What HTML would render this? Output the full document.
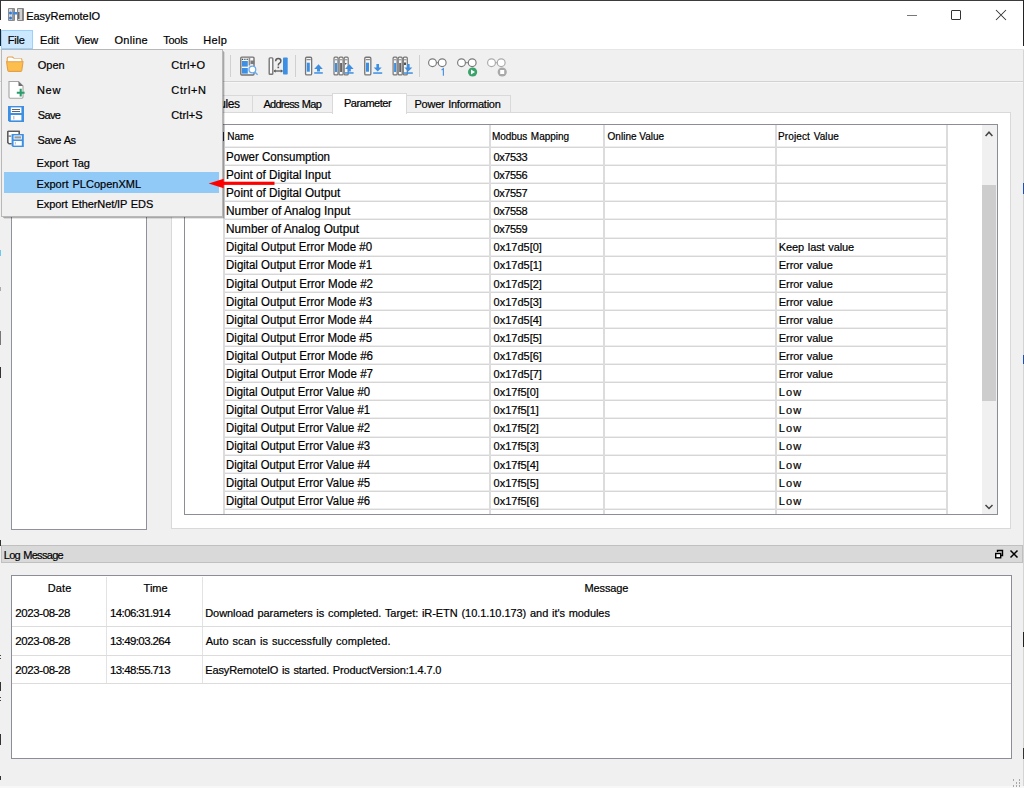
<!DOCTYPE html>
<html><head><meta charset="utf-8">
<style>
html,body{margin:0;padding:0;}
body{width:1024px;height:788px;overflow:hidden;position:relative;background:#f0f0f0;font-family:"Liberation Sans",sans-serif;}
.a{position:absolute;box-sizing:border-box;}
.t{position:absolute;line-height:20px;white-space:pre;font-family:"Liberation Sans",sans-serif;-webkit-text-stroke:0.2px currentColor;}
svg{position:absolute;overflow:visible;}
</style></head><body>
<!-- title + menubar white -->
<div class="a" style="left:0;top:0;width:1024px;height:49px;background:#fff"></div>
<div class="a" style="left:0;top:49px;width:1024px;height:1px;background:#e6e6e6"></div>
<div class="a" style="left:0;top:0;width:1024px;height:1px;background:#3b3b3b"></div>
<div class="a" style="left:0;top:0;width:1px;height:20px;background:#333"></div>
<div class="a" style="left:0;top:29px;width:1px;height:17px;background:#222"></div>
<div class="a" style="left:1023px;top:0;width:1px;height:46px;background:#222"></div>
<div class="a" style="left:1023px;top:50px;width:1px;height:738px;background:#d4d4d4"></div>

<!-- title icon -->
<svg style="left:0;top:0" width="30" height="30">
  <rect x="8" y="8" width="7" height="13" rx="1" fill="#8a8a8a"/>
  <rect x="9" y="9" width="5" height="11" fill="#d9d9d9"/>
  <rect x="12" y="9" width="2" height="11" fill="#9a9a9a"/>
  <circle cx="10.5" cy="13" r="1.5" fill="#2b7de0"/>
  <circle cx="10.5" cy="18" r="1.5" fill="#2b7de0"/>
  <rect x="13" y="12" width="4" height="2.5" fill="#3a8ae6"/>
  <rect x="17" y="8" width="7" height="13" rx="1" fill="#858585"/>
  <rect x="18" y="9" width="4" height="11" fill="#d0d0d0"/>
  <rect x="18" y="12" width="1.5" height="7" fill="#6a6a6a"/>
</svg>

<!-- window controls -->
<div class="a" style="left:907px;top:14.5px;width:10px;height:1.5px;background:#777"></div>
<div class="a" style="left:951px;top:10px;width:10px;height:10px;border:1px solid #333;border-radius:1px"></div>
<svg style="left:0;top:0" width="1024" height="30">
  <path d="M996 10 L1006 20 M1006 10 L996 20" stroke="#333" stroke-width="1.05"/>
</svg>

<!-- menubar File highlight -->
<div class="a" style="left:1px;top:30px;width:32px;height:19px;background:#cce8ff;border:1px solid #99d1ff"></div>

<!-- toolbar bottom line -->
<div class="a" style="left:0;top:81px;width:1023px;height:1px;background:#d2d2d2"></div>
<div class="a" style="left:0;top:82px;width:1023px;height:1px;background:#f7f7f7"></div>

<!-- toolbar separators -->
<div class="a" style="left:230px;top:55px;width:1px;height:22px;background:#d0d0d0"></div>
<div class="a" style="left:295px;top:55px;width:1px;height:22px;background:#d0d0d0"></div>
<div class="a" style="left:419px;top:55px;width:1px;height:22px;background:#d0d0d0"></div>

<!-- toolbar icons -->
<svg style="left:0;top:0" width="1024" height="90">
  <!-- icon1: module + magnifier -->
  <rect x="240.8" y="57.1" width="13.2" height="17.9" rx="1" fill="#f6f6f6" stroke="#727272" stroke-width="1.4"/>
  <rect x="242" y="58.7" width="1.2" height="1.2" fill="#333"/><rect x="244.3" y="58.7" width="1.2" height="1.2" fill="#333"/><rect x="246.6" y="58.7" width="1.2" height="1.2" fill="#333"/>
  <rect x="242" y="61" width="5.8" height="5.6" fill="#3d8fe3"/>
  <rect x="242" y="68" width="5.8" height="5.6" fill="#3d8fe3"/>
  <rect x="248.6" y="57.5" width="1.6" height="8" fill="#8c8c8c"/>
  <rect x="250.5" y="60.5" width="3.8" height="3.6" fill="#7a7a7a"/>
  <circle cx="252.4" cy="69.5" r="3.4" fill="#fff" stroke="#66aaf0" stroke-width="1.3"/>
  <path d="M254.8 72 L257.6 74.8" stroke="#66aaf0" stroke-width="1.4"/>
  <!-- icon2: ? -->
  <rect x="269.2" y="57.9" width="3.6" height="16.4" rx="0.8" fill="#fafafa" stroke="#767676" stroke-width="1.4"/>
  <rect x="283" y="57.5" width="4.7" height="17.1" rx="0.8" fill="#3d8fe3"/>
  <path d="M275.6 61.2 Q275.8 58.6 278.3 58.6 Q280.9 58.6 280.9 61 Q280.9 62.6 279.3 63.4 Q278.3 64 278.3 65.6" stroke="#5c5c5c" stroke-width="1.5" fill="none"/>
  <rect x="277.5" y="66.6" width="1.6" height="1.6" fill="#5c5c5c"/>
  <path d="M274 71 H282.5" stroke="#5c5c5c" stroke-width="1.3"/>
  <path d="M273.6 71 L275.6 69.2 V72.8 Z M282.8 71 L280.8 69.2 V72.8 Z" fill="#5c5c5c"/>
  <!-- icon3 -->
  <rect x="305.54999999999995" y="57.25" width="6.1000000000000005" height="17.599999999999998" rx="1.2" fill="#f6f6f6" stroke="#767676" stroke-width="1.3"/><rect x="306.5" y="59.0" width="4.2" height="1.2" fill="#8a8a8a"/><rect x="306.8" y="62.7" width="3" height="9" fill="#3d8fe3"/><path d="M314.2 69 L318.5 64.3 L322.8 69 H320.0 V71.6 H317.0 V69 Z" fill="#3d8fe3"/><rect x="314.2" y="72.2" width="8.6" height="1.5" fill="#3d8fe3"/>
  <!-- icon4 -->
  <rect x="334.0" y="57.2" width="4.0" height="17.7" rx="1" fill="#f6f6f6" stroke="#767676" stroke-width="1.2"/><rect x="334.79999999999995" y="59.2" width="2.4000000000000004" height="1.1" fill="#8a8a8a"/><rect x="335.0" y="63" width="2" height="9" fill="#3d8fe3"/><rect x="339.1" y="57.2" width="4.0" height="17.7" rx="1" fill="#f6f6f6" stroke="#767676" stroke-width="1.2"/><rect x="339.9" y="59.2" width="2.4000000000000004" height="1.1" fill="#8a8a8a"/><rect x="340.1" y="63" width="2" height="9" fill="#666"/><rect x="344.20000000000005" y="57.2" width="4.0" height="17.7" rx="1" fill="#f6f6f6" stroke="#767676" stroke-width="1.2"/><rect x="345.0" y="59.2" width="2.4000000000000004" height="1.1" fill="#8a8a8a"/><path d="M345 63 H347 L345 65 Z" fill="#555"/><path d="M345.0 69 L349.3 64.3 L353.6 69 H350.8 V71.6 H347.8 V69 Z" fill="#3d8fe3"/><rect x="345.0" y="72.2" width="8.6" height="1.5" fill="#3d8fe3"/>
  <!-- icon5 -->
  <rect x="364.75" y="57.25" width="6.1000000000000005" height="17.599999999999998" rx="1.2" fill="#f6f6f6" stroke="#767676" stroke-width="1.3"/><rect x="365.70000000000005" y="59.0" width="4.2" height="1.2" fill="#8a8a8a"/><rect x="366" y="62.7" width="3" height="9" fill="#3d8fe3"/><path d="M376.4 64 H379.0 V67.6 H381.7 L377.7 71.6 L373.7 67.6 H376.4 Z" fill="#3d8fe3"/><rect x="373.2" y="72.3" width="9" height="1.5" fill="#3d8fe3"/>
  <!-- icon6 -->
  <rect x="393.1" y="57.2" width="4.0" height="17.7" rx="1" fill="#f6f6f6" stroke="#767676" stroke-width="1.2"/><rect x="393.9" y="59.2" width="2.4000000000000004" height="1.1" fill="#8a8a8a"/><rect x="394.1" y="63" width="2" height="9" fill="#3d8fe3"/><rect x="398.20000000000005" y="57.2" width="4.0" height="17.7" rx="1" fill="#f6f6f6" stroke="#767676" stroke-width="1.2"/><rect x="399.0" y="59.2" width="2.4000000000000004" height="1.1" fill="#8a8a8a"/><rect x="399.20000000000005" y="63" width="2" height="9" fill="#666"/><rect x="403.3" y="57.2" width="4.0" height="17.7" rx="1" fill="#f6f6f6" stroke="#767676" stroke-width="1.2"/><rect x="404.09999999999997" y="59.2" width="2.4000000000000004" height="1.1" fill="#8a8a8a"/><rect x="404" y="62.5" width="2" height="2.5" fill="#555"/><path d="M407.0 64 H409.6 V67.6 H412.3 L408.3 71.6 L404.3 67.6 H407.0 Z" fill="#3d8fe3"/><rect x="403.8" y="72.3" width="9" height="1.5" fill="#3d8fe3"/>
  <!-- icon7: circles + 1 -->
  <circle cx="432.5" cy="62.7" r="3.9" fill="#fff" stroke="#7a7a7a" stroke-width="1.15"/>
  <circle cx="442.2" cy="62.7" r="3.9" fill="#fff" stroke="#7a7a7a" stroke-width="1.15"/>
  <rect x="436.4" y="62.2" width="2" height="1" fill="#7a7a7a"/>
  <path d="M441.6 69.9 L443.4 68.6 V75.8" stroke="#4b95e6" stroke-width="1.2" fill="none"/>
  <!-- icon8: circles + play -->
  <circle cx="461.5" cy="62.7" r="3.9" fill="#fff" stroke="#7a7a7a" stroke-width="1.15"/>
  <circle cx="472.2" cy="62.7" r="3.9" fill="#fff" stroke="#7a7a7a" stroke-width="1.15"/>
  <rect x="465.4" y="62.2" width="2.8" height="1" fill="#7a7a7a"/><circle cx="472.6" cy="72" r="4.6" fill="#3aa36a"/>
  <path d="M471 69.5 L475 72 L471 74.5 Z" fill="#fff"/>
  <!-- icon9: circles + stop -->
  <circle cx="491.5" cy="62.7" r="3.9" fill="#fff" stroke="#a9a9a9" stroke-width="1.15"/>
  <circle cx="501.2" cy="62.7" r="3.9" fill="#fff" stroke="#a9a9a9" stroke-width="1.15"/>
  <rect x="495.4" y="62.2" width="2" height="1" fill="#a9a9a9"/><circle cx="502.2" cy="72" r="4.6" fill="#a9a9a9"/>
  <rect x="500.2" y="70" width="4" height="4" fill="#fff"/>
</svg>

<!-- tabs -->
<div class="a" style="left:172px;top:95px;width:81px;height:18px;background:#f0f0f0;border:1px solid #d9d9d9;border-bottom:none"></div>
<div class="t" style="left:197px;top:94px;font-size:12px;letter-spacing:-0.4px">Modules</div>
<div class="a" style="left:252px;top:95px;width:81px;height:18px;background:#f0f0f0;border:1px solid #d9d9d9;border-bottom:none"></div>
<div class="a" style="left:406px;top:95px;width:105px;height:18px;background:#f0f0f0;border:1px solid #d9d9d9;border-bottom:none"></div>

<!-- left panel -->
<div class="a" style="left:11px;top:96px;width:136px;height:434px;background:#fff;border:1px solid #8f929a"></div>

<!-- tab pane -->
<div class="a" style="left:171px;top:112px;width:840px;height:417px;background:#fff;border:1px solid #d9d9d9"></div>
<!-- active tab -->
<div class="a" style="left:332px;top:93px;width:75px;height:21px;background:#fff;border:1px solid #d9d9d9;border-bottom:none"></div>

<!-- table -->
<div class="a" style="left:184px;top:124px;width:814px;height:391px;background:#fff;border:1px solid #8b8e96;border-top-color:#8b8e96"></div>
<!-- table grid -->
<div id="grid"></div>
<svg style="left:0;top:0" width="1024" height="520">
<rect x="223" y="146" width="724" height="1" fill="#eeeeee"/>
<rect x="223" y="147" width="724" height="1" fill="#d6d6d6"/>
<rect x="223" y="164" width="724" height="1" fill="#eeeeee"/>
<rect x="223" y="165" width="724" height="1" fill="#d6d6d6"/>
<rect x="223" y="182" width="724" height="1" fill="#eeeeee"/>
<rect x="223" y="183" width="724" height="1" fill="#d6d6d6"/>
<rect x="223" y="200" width="724" height="1" fill="#eeeeee"/>
<rect x="223" y="201" width="724" height="1" fill="#d6d6d6"/>
<rect x="223" y="218" width="724" height="1" fill="#eeeeee"/>
<rect x="223" y="219" width="724" height="1" fill="#d6d6d6"/>
<rect x="223" y="237" width="724" height="1" fill="#eeeeee"/>
<rect x="223" y="238" width="724" height="1" fill="#d6d6d6"/>
<rect x="223" y="255" width="724" height="1" fill="#eeeeee"/>
<rect x="223" y="256" width="724" height="1" fill="#d6d6d6"/>
<rect x="223" y="273" width="724" height="1" fill="#eeeeee"/>
<rect x="223" y="274" width="724" height="1" fill="#d6d6d6"/>
<rect x="223" y="291" width="724" height="1" fill="#eeeeee"/>
<rect x="223" y="292" width="724" height="1" fill="#d6d6d6"/>
<rect x="223" y="309" width="724" height="1" fill="#eeeeee"/>
<rect x="223" y="310" width="724" height="1" fill="#d6d6d6"/>
<rect x="223" y="327" width="724" height="1" fill="#eeeeee"/>
<rect x="223" y="328" width="724" height="1" fill="#d6d6d6"/>
<rect x="223" y="345" width="724" height="1" fill="#eeeeee"/>
<rect x="223" y="346" width="724" height="1" fill="#d6d6d6"/>
<rect x="223" y="363" width="724" height="1" fill="#eeeeee"/>
<rect x="223" y="364" width="724" height="1" fill="#d6d6d6"/>
<rect x="223" y="381" width="724" height="1" fill="#eeeeee"/>
<rect x="223" y="382" width="724" height="1" fill="#d6d6d6"/>
<rect x="223" y="399" width="724" height="1" fill="#eeeeee"/>
<rect x="223" y="400" width="724" height="1" fill="#d6d6d6"/>
<rect x="223" y="417" width="724" height="1" fill="#eeeeee"/>
<rect x="223" y="418" width="724" height="1" fill="#d6d6d6"/>
<rect x="223" y="436" width="724" height="1" fill="#eeeeee"/>
<rect x="223" y="437" width="724" height="1" fill="#d6d6d6"/>
<rect x="223" y="454" width="724" height="1" fill="#eeeeee"/>
<rect x="223" y="455" width="724" height="1" fill="#d6d6d6"/>
<rect x="223" y="472" width="724" height="1" fill="#eeeeee"/>
<rect x="223" y="473" width="724" height="1" fill="#d6d6d6"/>
<rect x="223" y="490" width="724" height="1" fill="#eeeeee"/>
<rect x="223" y="491" width="724" height="1" fill="#d6d6d6"/>
<rect x="223" y="508" width="724" height="1" fill="#eeeeee"/>
<rect x="223" y="509" width="724" height="1" fill="#d6d6d6"/>
<rect x="223" y="125" width="2" height="389" fill="#dcdcdc"/>
<rect x="489" y="125" width="2" height="389" fill="#dcdcdc"/>
<rect x="603" y="125" width="2" height="389" fill="#dcdcdc"/>
<rect x="775" y="125" width="2" height="389" fill="#dcdcdc"/>
<rect x="946" y="125" width="2" height="389" fill="#dcdcdc"/>
</svg>
<!-- scrollbar -->
<div class="a" style="left:982px;top:125px;width:15px;height:389px;background:#f0f0f0"></div>
<div class="a" style="left:982px;top:185px;width:14px;height:216px;background:#cdcdcd"></div>
<svg style="left:0;top:0" width="1024" height="520">
  <path d="M985.6 136 L989 132.2 L992.4 136" stroke="#444" stroke-width="1.5" fill="none"/>
  <path d="M985.5 505 L989 508.5 L992.5 505" stroke="#444" stroke-width="1.5" fill="none"/>
</svg>
<div class="a" style="left:223px;top:132px;width:1px;height:9px;background:#2a2a40"></div>

<!-- log dock -->
<div class="a" style="left:1px;top:545px;width:1022px;height:18px;background:#d9d9d9;border:1px solid #c0c0c0"></div>
<svg style="left:0;top:0" width="1024" height="788">
  <rect x="995.7" y="553.5" width="5" height="4.3" fill="#fff" stroke="#000" stroke-width="1.4"/>
  <path d="M997.5 552 V550.5 H1002.5 V555.5 H1001" stroke="#000" stroke-width="1.4" fill="none"/>
  <path d="M1010.5 550.5 L1017.5 557.5 M1017.5 550.5 L1010.5 557.5" stroke="#000" stroke-width="1.5"/>
</svg>
<div class="a" style="left:11px;top:575px;width:1001px;height:184px;background:#fff;border:1px solid #8b8e96"></div>
<div class="a" style="left:106px;top:577px;width:1px;height:107px;background:#e3e3e3"></div>
<div class="a" style="left:202px;top:577px;width:1px;height:107px;background:#e3e3e3"></div>
<div class="a" style="left:12px;top:626px;width:999px;height:1px;background:#dcdcdc"></div>
<div class="a" style="left:12px;top:655px;width:999px;height:1px;background:#dcdcdc"></div>
<div class="a" style="left:12px;top:683px;width:999px;height:1px;background:#dcdcdc"></div>
<!-- status bar line -->
<div class="a" style="left:0;top:786px;width:1024px;height:2px;background:#f7f7f7"></div>

<!-- edge artifacts & grip -->
<div class="a" style="left:1012.5px;top:779px;width:1.6px;height:1.6px;background:#a8a8a8"></div>
<div class="a" style="left:1015.5px;top:782px;width:1.6px;height:1.6px;background:#a8a8a8"></div>
<div class="a" style="left:1018.5px;top:779px;width:1.6px;height:1.6px;background:#a8a8a8"></div>
<div class="a" style="left:1012.5px;top:785px;width:1.6px;height:1.6px;background:#a8a8a8"></div>
<div class="a" style="left:1015.5px;top:785px;width:1.6px;height:1.6px;background:#a8a8a8"></div>
<div class="a" style="left:1018.5px;top:782px;width:1.6px;height:1.6px;background:#a8a8a8"></div>
<div class="a" style="left:1018.5px;top:785px;width:1.6px;height:1.6px;background:#a8a8a8"></div>
<div class="a" style="left:1023px;top:183px;width:1px;height:11px;background:#1f4fb0"></div>
<div class="a" style="left:1023px;top:355px;width:1px;height:9px;background:#1f4fb0"></div>
<div class="a" style="left:1023px;top:632px;width:1px;height:15px;background:#222"></div>
<div class="a" style="left:1023px;top:748px;width:1px;height:11px;background:#333"></div>
<div class="a" style="left:0;top:540px;width:1px;height:6px;background:#333"></div>
<div class="a" style="left:0;top:331px;width:1px;height:14px;background:#777"></div>
<div class="a" style="left:0;top:250px;width:1px;height:6px;background:#6cc8f0"></div>
<div class="a" style="left:0;top:287px;width:1px;height:4px;background:#aaa"></div>
<div class="a" style="left:0;top:367px;width:1px;height:11px;background:#333"></div>
<div class="a" style="left:0;top:655px;width:1px;height:1px;background:#444"></div>
<div class="a" style="left:0;top:658px;width:1px;height:1px;background:#444"></div>
<div class="a" style="left:0;top:682px;width:1px;height:9px;background:#333"></div>
<div class="a" style="left:0;top:697px;width:1px;height:1px;background:#444"></div>
<div class="a" style="left:0;top:700px;width:1px;height:1px;background:#444"></div>
<div class="a" style="left:0;top:734px;width:1px;height:11px;background:#333"></div>
<div class="a" style="left:0;top:776px;width:1px;height:4px;background:#333"></div>
<div class="t" style="left:26.30px;top:5.60px;font-size:11px;letter-spacing:-0.064px;word-spacing:0.00px;color:#000;">EasyRemoteIO</div>
<div class="t" style="left:7.80px;top:30.00px;font-size:11px;letter-spacing:-0.200px;word-spacing:0.00px;color:#000;">File</div>
<div class="t" style="left:40.00px;top:30.00px;font-size:11px;letter-spacing:0.067px;word-spacing:0.00px;color:#000;">Edit</div>
<div class="t" style="left:75.00px;top:30.00px;font-size:11px;letter-spacing:-0.167px;word-spacing:0.00px;color:#000;">View</div>
<div class="t" style="left:114.40px;top:30.00px;font-size:11px;letter-spacing:0.300px;word-spacing:0.00px;color:#000;">Online</div>
<div class="t" style="left:163.20px;top:30.00px;font-size:11px;letter-spacing:-0.250px;word-spacing:0.00px;color:#000;">Tools</div>
<div class="t" style="left:203.20px;top:30.00px;font-size:11px;letter-spacing:0.333px;word-spacing:0.00px;color:#000;">Help</div>
<div class="t" style="left:263.40px;top:94.00px;font-size:11px;letter-spacing:-0.720px;word-spacing:0.80px;color:#000;">Address Map</div>
<div class="t" style="left:344.00px;top:92.75px;font-size:11px;letter-spacing:-0.463px;word-spacing:0.00px;color:#000;">Parameter</div>
<div class="t" style="left:414.50px;top:94.00px;font-size:11px;letter-spacing:-0.231px;word-spacing:0.80px;color:#000;">Power Information</div>
<div class="t" style="left:227.20px;top:127.20px;font-size:10px;letter-spacing:0.000px;word-spacing:0.00px;color:#000;">Name</div>
<div class="t" style="left:491.90px;top:127.20px;font-size:10px;letter-spacing:-0.031px;word-spacing:0.80px;color:#000;">Modbus Mapping</div>
<div class="t" style="left:607.60px;top:127.20px;font-size:10px;letter-spacing:0.000px;word-spacing:0.00px;color:#000;">Online Value</div>
<div class="t" style="left:778.10px;top:127.20px;font-size:10px;letter-spacing:0.108px;word-spacing:0.80px;color:#000;">Project Value</div>
<div class="t" style="left:226.00px;top:146.80px;font-size:12px;transform:scaleX(0.9626);transform-origin:1px 0;color:#000">Power Consumption</div>
<div class="t" style="left:493.60px;top:146.80px;font-size:11px;letter-spacing:-0.420px;word-spacing:0.00px;color:#000;">0x7533</div>
<div class="t" style="left:226.00px;top:164.90px;font-size:12px;transform:scaleX(0.9757);transform-origin:1px 0;color:#000">Point of Digital Input</div>
<div class="t" style="left:493.60px;top:164.90px;font-size:11px;letter-spacing:-0.420px;word-spacing:0.00px;color:#000;">0x7556</div>
<div class="t" style="left:226.00px;top:183.00px;font-size:12px;transform:scaleX(0.9784);transform-origin:1px 0;color:#000">Point of Digital Output</div>
<div class="t" style="left:493.60px;top:183.00px;font-size:11px;letter-spacing:-0.420px;word-spacing:0.00px;color:#000;">0x7557</div>
<div class="t" style="left:226.00px;top:201.10px;font-size:12px;transform:scaleX(0.9864);transform-origin:1px 0;color:#000">Number of Analog Input</div>
<div class="t" style="left:493.60px;top:201.10px;font-size:11px;letter-spacing:-0.420px;word-spacing:0.00px;color:#000;">0x7558</div>
<div class="t" style="left:226.00px;top:219.20px;font-size:12px;transform:scaleX(0.9822);transform-origin:1px 0;color:#000">Number of Analog Output</div>
<div class="t" style="left:493.60px;top:219.20px;font-size:11px;letter-spacing:-0.420px;word-spacing:0.00px;color:#000;">0x7559</div>
<div class="t" style="left:226.00px;top:237.30px;font-size:12px;transform:scaleX(0.9559);transform-origin:1px 0;color:#000">Digital Output Error Mode #0</div>
<div class="t" style="left:493.60px;top:237.30px;font-size:11px;letter-spacing:0.000px;word-spacing:0.00px;color:#000;">0x17d5[0]</div>
<div class="t" style="left:778.80px;top:237.30px;font-size:11px;letter-spacing:-0.100px;word-spacing:0.80px;color:#000;">Keep last value</div>
<div class="t" style="left:226.00px;top:255.40px;font-size:12px;transform:scaleX(0.9559);transform-origin:1px 0;color:#000">Digital Output Error Mode #1</div>
<div class="t" style="left:493.60px;top:255.40px;font-size:11px;letter-spacing:0.000px;word-spacing:0.00px;color:#000;">0x17d5[1]</div>
<div class="t" style="left:778.80px;top:255.40px;font-size:11px;letter-spacing:-0.060px;word-spacing:0.80px;color:#000;">Error value</div>
<div class="t" style="left:226.00px;top:273.50px;font-size:12px;transform:scaleX(0.9623);transform-origin:1px 0;color:#000">Digital Output Error Mode #2</div>
<div class="t" style="left:493.60px;top:273.50px;font-size:11px;letter-spacing:0.000px;word-spacing:0.00px;color:#000;">0x17d5[2]</div>
<div class="t" style="left:778.80px;top:273.50px;font-size:11px;letter-spacing:-0.060px;word-spacing:0.80px;color:#000;">Error value</div>
<div class="t" style="left:226.00px;top:291.60px;font-size:12px;transform:scaleX(0.9559);transform-origin:1px 0;color:#000">Digital Output Error Mode #3</div>
<div class="t" style="left:493.60px;top:291.60px;font-size:11px;letter-spacing:0.000px;word-spacing:0.00px;color:#000;">0x17d5[3]</div>
<div class="t" style="left:778.80px;top:291.60px;font-size:11px;letter-spacing:-0.060px;word-spacing:0.80px;color:#000;">Error value</div>
<div class="t" style="left:226.00px;top:309.70px;font-size:12px;transform:scaleX(0.9559);transform-origin:1px 0;color:#000">Digital Output Error Mode #4</div>
<div class="t" style="left:493.60px;top:309.70px;font-size:11px;letter-spacing:0.000px;word-spacing:0.00px;color:#000;">0x17d5[4]</div>
<div class="t" style="left:778.80px;top:309.70px;font-size:11px;letter-spacing:-0.060px;word-spacing:0.80px;color:#000;">Error value</div>
<div class="t" style="left:226.00px;top:327.80px;font-size:12px;transform:scaleX(0.9559);transform-origin:1px 0;color:#000">Digital Output Error Mode #5</div>
<div class="t" style="left:493.60px;top:327.80px;font-size:11px;letter-spacing:0.000px;word-spacing:0.00px;color:#000;">0x17d5[5]</div>
<div class="t" style="left:778.80px;top:327.80px;font-size:11px;letter-spacing:-0.060px;word-spacing:0.80px;color:#000;">Error value</div>
<div class="t" style="left:226.00px;top:345.90px;font-size:12px;transform:scaleX(0.9623);transform-origin:1px 0;color:#000">Digital Output Error Mode #6</div>
<div class="t" style="left:493.60px;top:345.90px;font-size:11px;letter-spacing:0.000px;word-spacing:0.00px;color:#000;">0x17d5[6]</div>
<div class="t" style="left:778.80px;top:345.90px;font-size:11px;letter-spacing:-0.060px;word-spacing:0.80px;color:#000;">Error value</div>
<div class="t" style="left:226.00px;top:364.00px;font-size:12px;transform:scaleX(0.9623);transform-origin:1px 0;color:#000">Digital Output Error Mode #7</div>
<div class="t" style="left:493.60px;top:364.00px;font-size:11px;letter-spacing:0.000px;word-spacing:0.00px;color:#000;">0x17d5[7]</div>
<div class="t" style="left:778.80px;top:364.00px;font-size:11px;letter-spacing:-0.060px;word-spacing:0.80px;color:#000;">Error value</div>
<div class="t" style="left:226.00px;top:382.10px;font-size:12px;transform:scaleX(0.9437);transform-origin:1px 0;color:#000">Digital Output Error Value #0</div>
<div class="t" style="left:493.60px;top:382.10px;font-size:11px;letter-spacing:0.000px;word-spacing:0.00px;color:#000;">0x17f5[0]</div>
<div class="t" style="left:778.80px;top:382.10px;font-size:11px;letter-spacing:1.050px;word-spacing:0.00px;color:#000;">Low</div>
<div class="t" style="left:226.00px;top:400.20px;font-size:12px;transform:scaleX(0.9437);transform-origin:1px 0;color:#000">Digital Output Error Value #1</div>
<div class="t" style="left:493.60px;top:400.20px;font-size:11px;letter-spacing:0.000px;word-spacing:0.00px;color:#000;">0x17f5[1]</div>
<div class="t" style="left:778.80px;top:400.20px;font-size:11px;letter-spacing:1.050px;word-spacing:0.00px;color:#000;">Low</div>
<div class="t" style="left:226.00px;top:418.30px;font-size:12px;transform:scaleX(0.9437);transform-origin:1px 0;color:#000">Digital Output Error Value #2</div>
<div class="t" style="left:493.60px;top:418.30px;font-size:11px;letter-spacing:0.000px;word-spacing:0.00px;color:#000;">0x17f5[2]</div>
<div class="t" style="left:778.80px;top:418.30px;font-size:11px;letter-spacing:1.050px;word-spacing:0.00px;color:#000;">Low</div>
<div class="t" style="left:226.00px;top:436.40px;font-size:12px;transform:scaleX(0.9437);transform-origin:1px 0;color:#000">Digital Output Error Value #3</div>
<div class="t" style="left:493.60px;top:436.40px;font-size:11px;letter-spacing:0.000px;word-spacing:0.00px;color:#000;">0x17f5[3]</div>
<div class="t" style="left:778.80px;top:436.40px;font-size:11px;letter-spacing:1.050px;word-spacing:0.00px;color:#000;">Low</div>
<div class="t" style="left:226.00px;top:454.50px;font-size:12px;transform:scaleX(0.9437);transform-origin:1px 0;color:#000">Digital Output Error Value #4</div>
<div class="t" style="left:493.60px;top:454.50px;font-size:11px;letter-spacing:0.000px;word-spacing:0.00px;color:#000;">0x17f5[4]</div>
<div class="t" style="left:778.80px;top:454.50px;font-size:11px;letter-spacing:1.050px;word-spacing:0.00px;color:#000;">Low</div>
<div class="t" style="left:226.00px;top:472.60px;font-size:12px;transform:scaleX(0.9437);transform-origin:1px 0;color:#000">Digital Output Error Value #5</div>
<div class="t" style="left:493.60px;top:472.60px;font-size:11px;letter-spacing:0.000px;word-spacing:0.00px;color:#000;">0x17f5[5]</div>
<div class="t" style="left:778.80px;top:472.60px;font-size:11px;letter-spacing:1.050px;word-spacing:0.00px;color:#000;">Low</div>
<div class="t" style="left:226.00px;top:490.70px;font-size:12px;transform:scaleX(0.9437);transform-origin:1px 0;color:#000">Digital Output Error Value #6</div>
<div class="t" style="left:493.60px;top:490.70px;font-size:11px;letter-spacing:0.000px;word-spacing:0.00px;color:#000;">0x17f5[6]</div>
<div class="t" style="left:778.80px;top:490.70px;font-size:11px;letter-spacing:1.050px;word-spacing:0.00px;color:#000;">Low</div>
<div class="t" style="left:3.70px;top:545.10px;font-size:11px;letter-spacing:-0.680px;word-spacing:0.80px;color:#000;">Log Message</div>
<div class="t" style="left:47.80px;top:577.60px;font-size:11px;letter-spacing:0.100px;word-spacing:0.00px;color:#000;">Date</div>
<div class="t" style="left:143.60px;top:577.80px;font-size:11px;letter-spacing:0.000px;word-spacing:0.00px;color:#000;">Time</div>
<div class="t" style="left:584.60px;top:577.50px;font-size:11px;letter-spacing:-0.133px;word-spacing:0.00px;color:#000;">Message</div>
<div class="t" style="left:15.30px;top:602.60px;font-size:11.5px;letter-spacing:-0.411px;word-spacing:0.00px;color:#000;">2023-08-28</div>
<div class="t" style="left:110.00px;top:602.60px;font-size:11.5px;letter-spacing:-0.600px;word-spacing:0.00px;color:#000;">14:06:31.914</div>
<div class="t" style="left:205.20px;top:602.70px;font-size:11px;letter-spacing:-0.054px;word-spacing:0.80px;color:#000;">Download parameters is completed. Target: iR-ETN (10.1.10.173) and it's modules</div>
<div class="t" style="left:15.30px;top:631.10px;font-size:11.5px;letter-spacing:-0.411px;word-spacing:0.00px;color:#000;">2023-08-28</div>
<div class="t" style="left:110.00px;top:631.10px;font-size:11.5px;letter-spacing:-0.600px;word-spacing:0.00px;color:#000;">13:49:03.264</div>
<div class="t" style="left:205.70px;top:631.20px;font-size:11px;letter-spacing:0.069px;word-spacing:0.80px;color:#000;">Auto scan is successfully completed.</div>
<div class="t" style="left:15.30px;top:659.50px;font-size:11.5px;letter-spacing:-0.411px;word-spacing:0.00px;color:#000;">2023-08-28</div>
<div class="t" style="left:110.00px;top:659.50px;font-size:11.5px;letter-spacing:-0.600px;word-spacing:0.00px;color:#000;">13:48:55.713</div>
<div class="t" style="left:205.20px;top:659.60px;font-size:11px;letter-spacing:-0.126px;word-spacing:0.80px;color:#000;">EasyRemoteIO is started. ProductVersion:1.4.7.0</div>

<!-- menu popup -->
<div class="a" style="left:4px;top:52px;width:221px;height:167px;background:rgba(0,0,0,0.10)"></div>
<div class="a" style="left:3px;top:51px;width:221px;height:167px;background:rgba(0,0,0,0.22)"></div>
<div class="a" style="left:1px;top:49px;width:222px;height:168px;background:#f0f0f0;border:1px solid #b8b8b8"></div>
<div class="a" style="left:4px;top:172px;width:215px;height:21px;background:#91c9f7"></div>
<svg style="left:0;top:0" width="240" height="220">
  <!-- folder -->
  <path d="M7.2 62 V58.5 Q7.2 57 8.7 57 H12.5 L14 58.5 H20.5 Q22 58.5 22 60 V62" fill="#fff" stroke="#e3a049" stroke-width="1.1"/>
  <rect x="9" y="58.6" width="12" height="3" fill="#fff"/>
  <path d="M6.6 61.8 H23 L21.8 70.4 Q21.6 71.4 20.6 71.4 H9 Q8 71.4 7.8 70.4 Z" fill="#fcbf4d" stroke="#e3a049" stroke-width="1.1"/>
  <!-- new -->
  <path d="M9 81.5 H18.5 L23 86 V97 Q23 98.2 21.8 98.2 H10.2 Q9 98.2 9 97 Z" fill="#fff" stroke="#a3a3a3" stroke-width="1.1"/>
  <path d="M18.5 81.5 L23 86 H18.5 Z" fill="#6e6e6e"/>
  <path d="M20.7 88.8 V96.6 M16.8 92.7 H24.6" stroke="#2a9e6a" stroke-width="2.1"/>
  <!-- save -->
  <path d="M8 106 H24 V122 H9.5 L8 120.5 Z" fill="#3d8fe3"/>
  <rect x="10.8" y="107.4" width="10.6" height="5.6" fill="#fff"/>
  <rect x="12" y="109" width="8" height="0.9" fill="#555"/>
  <rect x="12" y="111" width="8" height="0.9" fill="#555"/>
  <rect x="10.8" y="115" width="10.6" height="5.4" fill="#fff"/>
  <rect x="13.2" y="116" width="1.2" height="3.5" fill="#bbb"/>
  <!-- save as -->
  <path d="M7.8 131.3 H19.2 V134 M7.8 131.3 V142.5 L9 143.7 H11.5" fill="none" stroke="#5a5a5a" stroke-width="1.3"/>
  <rect x="8.5" y="132" width="10" height="11" fill="#fff"/>
  <path d="M7.8 131.3 H19.2 V134 M7.8 131.3 V142.5 L9 143.7 H11.5" fill="none" stroke="#5a5a5a" stroke-width="1.3"/>
  <rect x="8.2" y="135.5" width="3" height="1.2" fill="#6a6a6a"/>
  <path d="M11.6 134 H23.8 V147 H12.8 L11.6 145.8 Z" fill="#3d8fe3"/>
  <rect x="13.6" y="135.4" width="8.2" height="4" fill="#fff"/>
  <rect x="14.4" y="136.3" width="6.6" height="2.2" fill="#9a9a9a"/>
  <rect x="13.6" y="141" width="8.2" height="4.6" fill="#fff"/>
  <rect x="14.8" y="142" width="1" height="2.5" fill="#bbb"/>
</svg>
<div class="t" style="left:37.70px;top:55.10px;font-size:11px;letter-spacing:0.033px;word-spacing:0.00px;color:#000;">Open</div>
<div class="t" style="left:171.30px;top:55.10px;font-size:11px;letter-spacing:0.340px;word-spacing:0.00px;color:#000;">Ctrl+O</div>
<div class="t" style="left:36.90px;top:80.00px;font-size:11px;letter-spacing:0.750px;word-spacing:0.00px;color:#000;">New</div>
<div class="t" style="left:171.30px;top:80.00px;font-size:11px;letter-spacing:0.640px;word-spacing:0.00px;color:#000;">Ctrl+N</div>
<div class="t" style="left:37.70px;top:104.90px;font-size:11px;letter-spacing:-0.633px;word-spacing:0.00px;color:#000;">Save</div>
<div class="t" style="left:171.30px;top:104.90px;font-size:11px;letter-spacing:0.100px;word-spacing:0.00px;color:#000;">Ctrl+S</div>
<div class="t" style="left:37.60px;top:129.90px;font-size:11px;letter-spacing:-0.450px;word-spacing:0.80px;color:#000;">Save As</div>
<div class="t" style="left:36.60px;top:152.90px;font-size:11px;letter-spacing:0.022px;word-spacing:0.80px;color:#000;">Export Tag</div>
<div class="t" style="left:36.60px;top:173.50px;font-size:11px;letter-spacing:0.025px;word-spacing:0.80px;color:#000;">Export PLCopenXML</div>
<div class="t" style="left:36.60px;top:193.70px;font-size:11px;letter-spacing:-0.100px;word-spacing:0.80px;color:#000;">Export EtherNet/IP EDS</div>

<!-- red arrow -->
<svg style="left:0;top:0" width="300" height="200">
  <path d="M208.7 183.4 L223.7 178.8 L223.7 188.2 Z" fill="#ff0000"/>
  <rect x="222" y="181.7" width="52.5" height="3.2" fill="#ff0000"/>
</svg>
</body></html>
